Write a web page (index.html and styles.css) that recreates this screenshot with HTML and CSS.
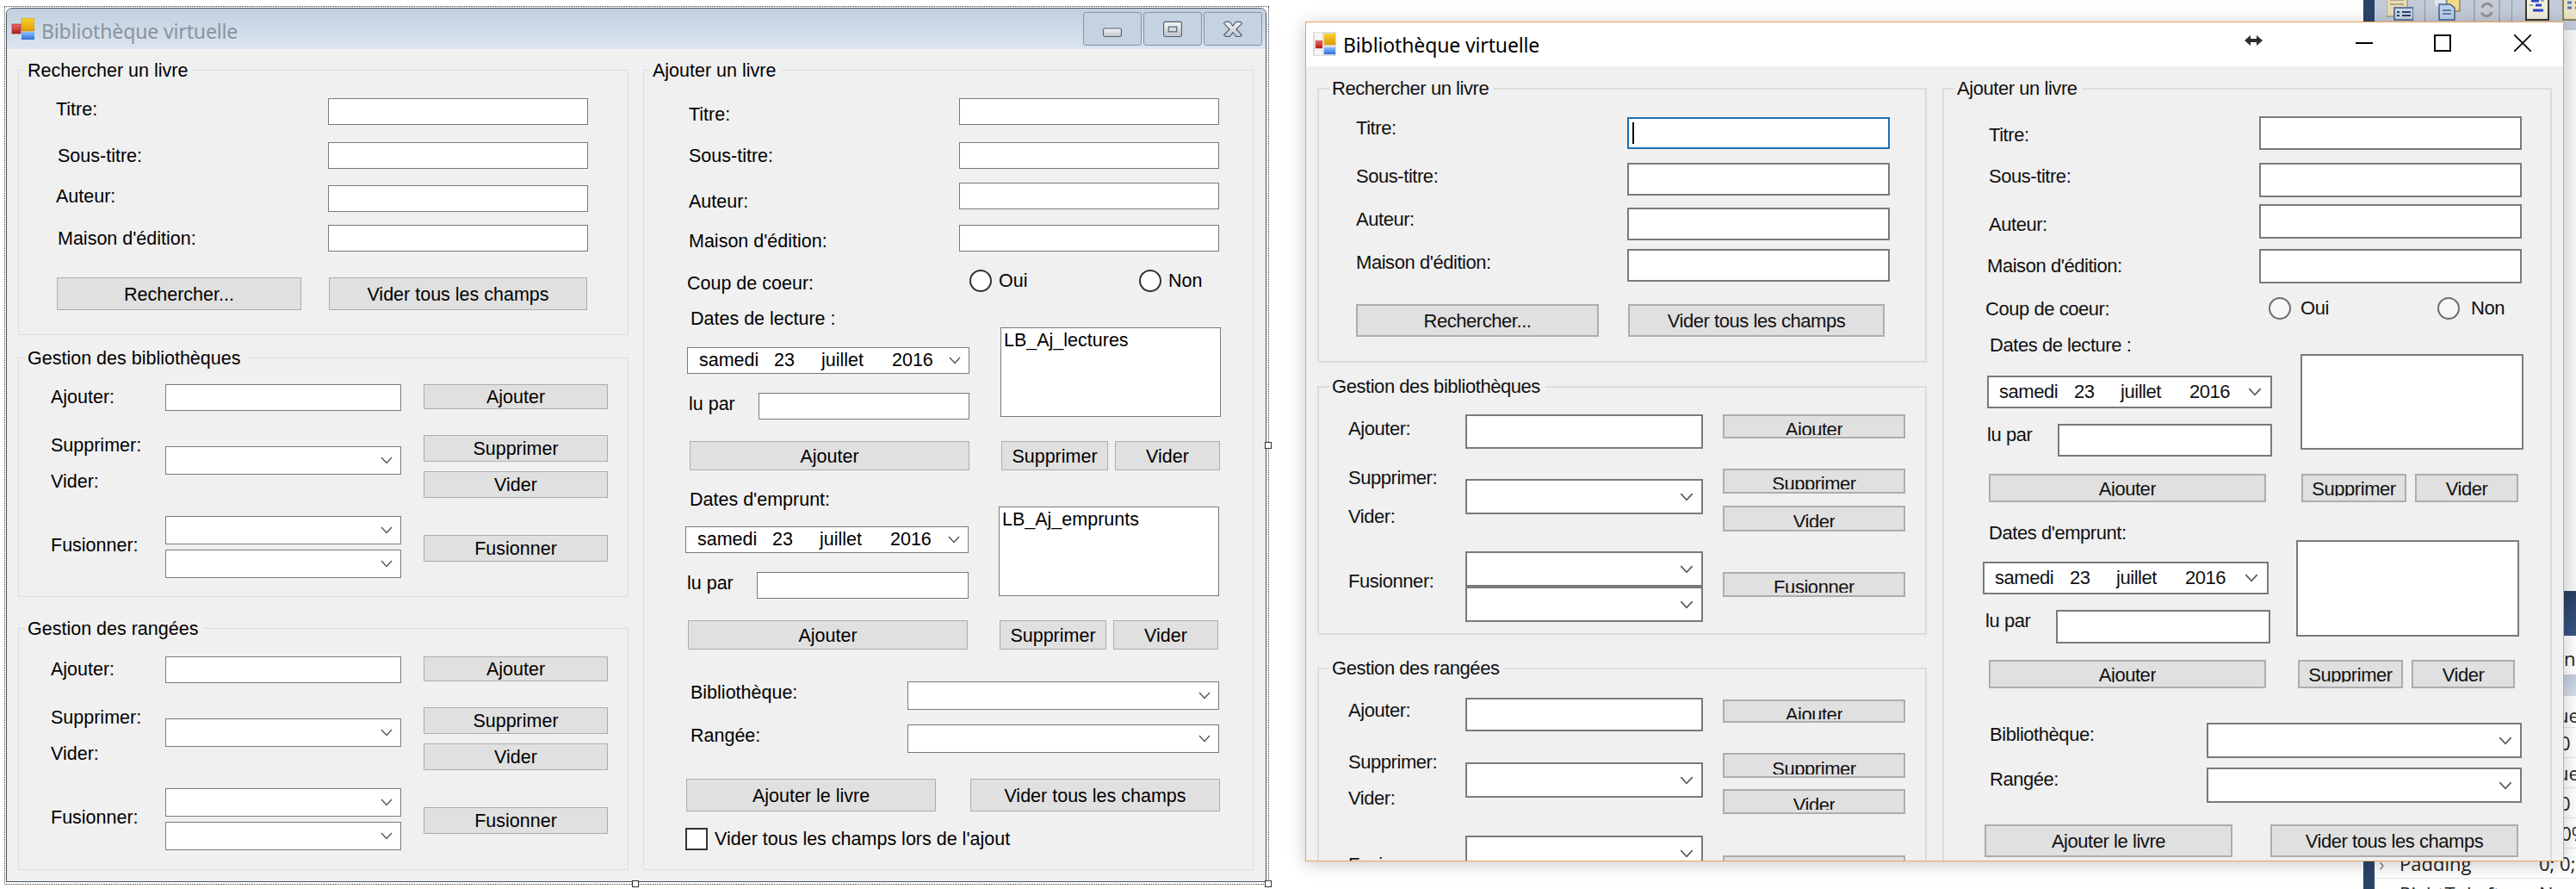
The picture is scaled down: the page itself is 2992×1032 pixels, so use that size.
FILE: index.html
```html
<!DOCTYPE html>
<html lang="fr">
<head>
<meta charset="utf-8">
<title>Bibliothèque virtuelle</title>
<link rel="stylesheet" href="styles.css">
</head>
<body>
<svg class="defs" aria-hidden="true">
  <defs>
    <linearGradient id="gr" x1="0" y1="0" x2="0" y2="1"><stop offset="0" stop-color="#ea6a66"/><stop offset="1" stop-color="#b41a1a"/></linearGradient>
    <linearGradient id="gy" x1="0" y1="0" x2="0" y2="1"><stop offset="0" stop-color="#f8d32a"/><stop offset="1" stop-color="#e09a06"/></linearGradient>
    <linearGradient id="gb" x1="0" y1="0" x2="0" y2="1"><stop offset="0" stop-color="#8cc0fb"/><stop offset="1" stop-color="#2d6fe0"/></linearGradient>
    <linearGradient id="gc" x1="0" y1="0" x2="0" y2="1"><stop offset="0" stop-color="#f7f7f7"/><stop offset="1" stop-color="#bfc3c7"/></linearGradient>
    <symbol id="chev" viewBox="0 0 14 9"><path d="M1 1 L7 7.5 L13 1" fill="none" stroke="#555" stroke-width="1.4"/></symbol>
  </defs>
</svg>

<aside class="panel">
  <div class="navy-strip"></div>
  <div class="panel-main">
    <div class="toolbar">
      <svg class="ti ti1" viewBox="0 0 31 30"><path d="M0 0h24v22H0z" fill="#e6dcb8" stroke="#8a8a70"/><path d="M4 3h16M4 8h16" stroke="#b7ab7c" stroke-width="2"/><rect x="9" y="12" width="22" height="14" fill="#c9d6ea" stroke="#43597f" stroke-width="1.5"/><path d="M12 17h3M18 17h10M12 21h3M18 21h10" stroke="#2c4369" stroke-width="2"/></svg>
      <span class="tsep"></span>
      <svg class="ti ti2" viewBox="0 0 30 30"><path d="M14 0h15v16H14z" fill="#f2d98a" stroke="#6d6232"/><path d="M0 2h12v8H0z" fill="#dfe6f0"/><path d="M5 8h13l5 4v14H5z" fill="#bcd0ee" stroke="#41618f" stroke-width="1.5"/><path d="M9 15h10M9 19h10" stroke="#41618f" stroke-width="1.5"/></svg>
      <svg class="ti ti3" viewBox="0 0 31 30"><rect x="1" y="1" width="29" height="28" fill="#c6ccd4" stroke="#a4abb4" stroke-width="2"/><path d="M10 12a6 6 0 0 1 10-3l2 2M21 17a6 6 0 0 1-10 3l-2-2" fill="none" stroke="#8e9398" stroke-width="3"/></svg>
      <span class="tsep"></span>
      <svg class="ti ti4" viewBox="0 0 28 30"><rect x="1" y="-2" width="26" height="28" fill="#f3efdf" stroke="#3d3a2c" stroke-width="2"/><path d="M7 4h9M12 9h7M9 15h12" stroke="#2b44c8" stroke-width="3"/><path d="M18 4h4M5 9h4" stroke="#9aa2b0" stroke-width="2"/></svg>
      <svg class="ti ti5" viewBox="0 0 30 30"><rect x="1" y="-2" width="28" height="28" fill="#e8e2c4" stroke="#85805e" stroke-width="2"/><path d="M6 6h5M15 6h9M6 12h5M15 12h9" stroke="#4a78b8" stroke-width="3"/></svg>
    </div>
    <div class="panel-blank"></div>
    <div class="panel-title"></div>
    <div class="panel-desc"><span>ne</span></div>
    <div class="panel-head"></div>
    <div class="prop prop-first"><span></span><span></span><span>True</span></div>
    <div class="prop"><span></span><span></span><span>0; 0</span></div>
    <div class="prop"><span></span><span></span><span>True</span></div>
    <div class="prop"><span></span><span></span><span>0; 0</span></div>
    <div class="prop"><span></span><span></span><span>100%</span></div>
    <div class="prop"><span class="exp">›</span><span>Padding</span><span>0; 0; 0; 0</span></div>
    <div class="prop"><span></span><span>RightToLeft</span><span>No</span></div>
  </div>
</aside>

<div class="selection">
  <section class="win w1">
    <header class="tbar">
      <svg class="appicon" viewBox="0 0 27 25"><path d="M0 6.5h27M11.5 0v25M0 18.5h27" stroke="#d5d9df" fill="none"/><rect x="1" y="7" width="10" height="11" fill="url(#gr)" stroke="#8a2020" stroke-width=".6"/><rect x="12" y="0" width="15" height="15" fill="url(#gy)" stroke="#b88a10" stroke-width=".6"/><rect x="12" y="16" width="15" height="9" fill="url(#gb)"/></svg>
      <span class="title">Bibliothèque virtuelle</span>
      <div class="caps">
        <span class="cap"><svg viewBox="0 0 68 39"><rect x="23" y="19" width="22" height="10" rx="2" fill="url(#gc)" stroke="#4f5f70" stroke-width="1.2"/></svg></span>
        <span class="cap"><svg viewBox="0 0 68 39"><rect x="23" y="11" width="22" height="18" rx="2" fill="url(#gc)" stroke="#4f5f70" stroke-width="1.2"/><rect x="29" y="17" width="10" height="6" fill="#d6d9dd" stroke="#4f5f70" stroke-width="1.2"/></svg></span>
        <span class="cap"><svg viewBox="0 0 68 39"><path d="M25 11h5l4 5 4-5h5l2 2-7 7 7 7-2 2h-5l-4-5-4 5h-5l-2-2 7-7-7-7z" fill="url(#gc)" stroke="#4f5f70" stroke-width="1.2"/></svg></span>
      </div>
    </header>
    <div class="body">
      <div class="stack">
        <div class="group w709 h308">
          <div class="legend">Rechercher un livre</div>
          <div class="cols ml43">
            <div class="stack w316">
              <span class="lb mt32">Titre:</span>
              <span class="lb mt28 ml2">Sous-titre:</span>
              <span class="lb mt21">Auteur:</span>
              <span class="lb mt23 ml2">Maison d'édition:</span>
            </div>
            <div class="stack">
              <input class="tb w302 h31 mt32">
              <input class="tb w302 h31 mt20">
              <input class="tb w302 h31 mt19">
              <input class="tb w302 h31 mt15">
            </div>
          </div>
          <div class="line ml44 mt30">
            <button class="btn w284 h38">Rechercher...</button>
            <button class="btn w300 h38 ml32">Vider tous les champs</button>
          </div>
        </div>

        <div class="group w709 h278 mt26">
          <div class="legend">Gestion des bibliothèques</div>
          <div class="cols ml37">
            <div class="stack w133">
              <span class="lb mt32">Ajouter:</span>
              <span class="lb mt30">Supprimer:</span>
              <span class="lb mt16">Vider:</span>
              <span class="lb mt48">Fusionner:</span>
            </div>
            <div class="stack">
              <input class="tb w274 h31 mt30">
              <div class="combo w274 h33 mt41"><svg class="chev"><use href="#chev"/></svg></div>
              <div class="combo w274 h33 mt48"><svg class="chev"><use href="#chev"/></svg></div>
              <div class="combo w274 h33 mt6"><svg class="chev"><use href="#chev"/></svg></div>
            </div>
            <div class="stack ml26">
              <button class="btn w214 h29 mt30">Ajouter</button>
              <button class="btn w214 h31 mt30">Supprimer</button>
              <button class="btn w214 h31 mt11">Vider</button>
              <button class="btn w214 h31 mt43">Fusionner</button>
            </div>
          </div>
        </div>

        <div class="group w709 h281 mt36">
          <div class="legend">Gestion des rangées</div>
          <div class="cols ml37">
            <div class="stack w133">
              <span class="lb mt34">Ajouter:</span>
              <span class="lb mt30">Supprimer:</span>
              <span class="lb mt16">Vider:</span>
              <span class="lb mt48">Fusionner:</span>
            </div>
            <div class="stack">
              <input class="tb w274 h31 mt32">
              <div class="combo w274 h33 mt41"><svg class="chev"><use href="#chev"/></svg></div>
              <div class="combo w274 h33 mt48"><svg class="chev"><use href="#chev"/></svg></div>
              <div class="combo w274 h33 mt6"><svg class="chev"><use href="#chev"/></svg></div>
            </div>
            <div class="stack ml26">
              <button class="btn w214 h29 mt32">Ajouter</button>
              <button class="btn w214 h31 mt30">Supprimer</button>
              <button class="btn w214 h31 mt11">Vider</button>
              <button class="btn w214 h31 mt43">Fusionner</button>
            </div>
          </div>
        </div>
      </div>

      <div class="group w709 h929">
        <div class="legend">Ajouter un livre</div>
        <div class="cols ml52">
          <div class="stack w314">
            <span class="lb mt38">Titre:</span>
            <span class="lb mt22">Sous-titre:</span>
            <span class="lb mt27">Auteur:</span>
            <span class="lb mt20">Maison d'édition:</span>
          </div>
          <div class="stack">
            <input class="tb w302 h31 mt32">
            <input class="tb w302 h31 mt20">
            <input class="tb w302 h31 mt16">
            <input class="tb w302 h31 mt18">
          </div>
        </div>
        <div class="line ml50 mt20">
          <span class="lb w328 mt3">Coup de coeur:</span>
          <label class="radio w197"><input type="radio" name="a1"><span class="lb ml8">Oui</span></label>
          <label class="radio"><input type="radio" name="a1"><span class="lb ml8">Non</span></label>
        </div>
        <div class="cols ml50 mt15">
          <div class="stack w328">
            <span class="lb ml4">Dates de lecture :</span>
            <div class="date w328 h31 mt20"><span class="d-day">samedi</span><span class="d-num">23</span><span class="d-month">juillet</span><span>2016</span><svg class="chev"><use href="#chev"/></svg></div>
            <div class="line mt22"><span class="lb ml2 w81">lu par</span><input class="tb w245 h31"></div>
          </div>
          <div class="stack ml36">
            <div class="list w256 h104 mt23">LB_Aj_lectures</div>
          </div>
        </div>
        <div class="line ml53 mt25">
          <button class="btn w325 h34">Ajouter</button>
          <button class="btn w124 h34 ml37">Supprimer</button>
          <button class="btn w122 h34 ml8">Vider</button>
        </div>
        <div class="cols ml48 mt21">
          <div class="stack w329">
            <span class="lb ml5">Dates d'emprunt:</span>
            <div class="date w329 h31 mt18"><span class="d-day">samedi</span><span class="d-num">23</span><span class="d-month">juillet</span><span>2016</span><svg class="chev"><use href="#chev"/></svg></div>
            <div class="line mt22"><span class="lb ml2 w81">lu par</span><input class="tb w246 h31"></div>
          </div>
          <div class="stack ml35">
            <div class="list w256 h104 mt21">LB_Aj_emprunts</div>
          </div>
        </div>
        <div class="line ml51 mt25">
          <button class="btn w325 h34">Ajouter</button>
          <button class="btn w124 h34 ml37">Supprimer</button>
          <button class="btn w122 h34 ml8">Vider</button>
        </div>
        <div class="line ml54 mt37">
          <span class="lb w252">Bibliothèque:</span>
          <div class="combo w362 h33"><svg class="chev"><use href="#chev"/></svg></div>
        </div>
        <div class="line ml54 mt17">
          <span class="lb w252">Rangée:</span>
          <div class="combo w362 h33"><svg class="chev"><use href="#chev"/></svg></div>
        </div>
        <div class="line ml49 mt30">
          <button class="btn w290 h38">Ajouter le livre</button>
          <button class="btn w290 h38 ml40">Vider tous les champs</button>
        </div>
        <label class="line ml48 mt19"><input class="check" type="checkbox"><span class="lb ml8">Vider tous les champs lors de l'ajout</span></label>
      </div>
    </div>
  </section>
  <span class="handle hd-right"></span>
  <span class="handle hd-bottom"></span>
  <span class="handle hd-corner"></span>
</div>

<section class="win w2">
  <header class="tbar">
    <svg class="appicon" viewBox="0 0 27 28"><rect width="27" height="28" fill="#dcdcdc"/><rect x="2" y="1" width="9" height="8" fill="#f6f6f6"/><rect x="2" y="20" width="9" height="7" fill="#f6f6f6"/><rect x="3" y="10" width="8" height="9" fill="url(#gr)"/><rect x="13" y="2" width="13" height="13" fill="url(#gy)"/><rect x="13" y="18" width="13" height="8" fill="url(#gb)"/></svg>
    <span class="title">Bibliothèque virtuelle</span>
    <div class="caps">
      <svg class="cap2" viewBox="0 0 20 20"><path d="M0 10h20" stroke="#000" stroke-width="2"/></svg>
      <svg class="cap2 gap71" viewBox="0 0 20 20"><rect x="1" y="1" width="18" height="18" fill="none" stroke="#000" stroke-width="2"/></svg>
      <svg class="cap2 gap73" viewBox="0 0 20 20"><path d="M0 0L20 20M20 0L0 20" stroke="#000" stroke-width="1.6"/></svg>
    </div>
  </header>
  <div class="body">
    <div class="stack">
      <div class="group w708 h319">
        <div class="legend">Rechercher un livre</div>
        <div class="cols ml43">
          <div class="stack w315">
            <span class="lb mt32">Titre:</span>
            <span class="lb mt30">Sous-titre:</span>
            <span class="lb mt24">Auteur:</span>
            <span class="lb mt24">Maison d'édition:</span>
          </div>
          <div class="stack">
            <div class="tb focus w305 h37 mt32"><span class="caret"></span></div>
            <input class="tb w305 h38 mt16">
            <input class="tb w305 h38 mt14">
            <input class="tb w305 h38 mt10">
          </div>
        </div>
        <div class="line ml43 mt26">
          <button class="btn w282 h38">Rechercher...</button>
          <button class="btn w298 h38 ml34">Vider tous les champs</button>
        </div>
      </div>

      <div class="group w708 h289 mt27">
        <div class="legend">Gestion des bibliothèques</div>
        <div class="cols ml34">
          <div class="stack w136">
            <span class="lb mt35">Ajouter:</span>
            <span class="lb mt31">Supprimer:</span>
            <span class="lb mt19">Vider:</span>
            <span class="lb mt49">Fusionner:</span>
          </div>
          <div class="stack">
            <input class="tb w276 h40 mt31">
            <div class="combo w276 h41 mt35"><svg class="chev"><use href="#chev"/></svg></div>
            <div class="combo w276 h41 mt43"><svg class="chev"><use href="#chev"/></svg></div>
            <div class="combo w276 h41"><svg class="chev"><use href="#chev"/></svg></div>
          </div>
          <div class="stack ml23">
            <button class="btn cut w212 h28 mt31 pt3"><span class="h19">Ajouter</span></button>
            <button class="btn cut w212 h29 mt35 pt3"><span class="h19">Supprimer</span></button>
            <button class="btn cut w212 h30 mt14 pt4"><span class="h19">Vider</span></button>
            <button class="btn cut w212 h29 mt47 pt3"><span class="h19">Fusionner</span></button>
          </div>
        </div>
      </div>

      <div class="group w708 h300 mt38">
        <div class="legend">Gestion des rangées</div>
        <div class="cols ml34">
          <div class="stack w136">
            <span class="lb mt35">Ajouter:</span>
            <span class="lb mt34">Supprimer:</span>
            <span class="lb mt16">Vider:</span>
            <span class="lb mt51">Fusionner:</span>
          </div>
          <div class="stack">
            <input class="tb w276 h39 mt33">
            <div class="combo w276 h41 mt36"><svg class="chev"><use href="#chev"/></svg></div>
            <div class="combo w276 h41 mt44"><svg class="chev"><use href="#chev"/></svg></div>
          </div>
          <div class="stack ml23">
            <button class="btn cut w212 h27 mt35 pt3"><span class="h18">Ajouter</span></button>
            <button class="btn cut w212 h29 mt35 pt4"><span class="h19">Supprimer</span></button>
            <button class="btn cut w212 h29 mt13 pt4"><span class="h18">Vider</span></button>
            <button class="btn cut w212 h29 mt48 pt4"><span class="h19">Fusionner</span></button>
          </div>
        </div>
      </div>
    </div>

    <div class="group w708 h950">
      <div class="legend">Ajouter un livre</div>
      <div class="cols ml50">
        <div class="stack w316">
          <span class="lb mt40 ml2">Titre:</span>
          <span class="lb mt22 ml2">Sous-titre:</span>
          <span class="lb mt30 ml2">Auteur:</span>
          <span class="lb mt22">Maison d'édition:</span>
        </div>
        <div class="stack">
          <input class="tb w305 h39 mt31">
          <input class="tb w305 h40 mt15">
          <input class="tb w305 h40 mt8">
          <input class="tb w305 h40 mt12">
        </div>
      </div>
      <div class="line ml48 mt16">
        <span class="lb w329 mt1">Coup de coeur:</span>
        <label class="radio w196"><input type="radio" name="a2"><span class="lb ml11">Oui</span></label>
        <label class="radio"><input type="radio" name="a2"><span class="lb ml13">Non</span></label>
      </div>
      <div class="cols ml50 mt16">
        <div class="stack w331">
          <span class="lb ml3">Dates de lecture :</span>
          <div class="date w331 h38 mt22"><span class="d-day">samedi</span><span class="d-num">23</span><span class="d-month">juillet</span><span>2016</span><svg class="chev"><use href="#chev"/></svg></div>
          <div class="line mt18"><span class="lb w82">lu par</span><input class="tb w249 h38"></div>
        </div>
        <div class="stack ml33">
          <div class="list w259 h111 mt23"></div>
        </div>
      </div>
      <div class="line ml52 mt20">
        <button class="btn cut w322 h33 pt3"><span class="h21">Ajouter</span></button>
        <button class="btn cut w122 h33 ml41 pt3"><span class="h21">Supprimer</span></button>
        <button class="btn w120 h33 ml10">Vider</button>
      </div>
      <div class="cols ml45 mt23">
        <div class="stack w334">
          <span class="lb ml7">Dates d'emprunt:</span>
          <div class="date w332 h38 mt20"><span class="d-day">samedi</span><span class="d-num">23</span><span class="d-month">juillet</span><span>2016</span><svg class="chev"><use href="#chev"/></svg></div>
          <div class="line mt18"><span class="lb ml3 w82">lu par</span><input class="tb w249 h39"></div>
        </div>
        <div class="stack ml30">
          <div class="list w259 h112 mt21"></div>
        </div>
      </div>
      <div class="line ml52 mt19">
        <button class="btn cut w322 h33 pt3"><span class="h21">Ajouter</span></button>
        <button class="btn cut w122 h33 ml37 pt3"><span class="h21">Supprimer</span></button>
        <button class="btn w120 h33 ml10">Vider</button>
      </div>
      <div class="line ml53 mt40">
        <span class="lb w252 mt1">Bibliothèque:</span>
        <div class="combo w366 h41"><svg class="chev"><use href="#chev"/></svg></div>
      </div>
      <div class="line ml53 mt11">
        <span class="lb w252 mt1">Rangée:</span>
        <div class="combo w366 h41"><svg class="chev"><use href="#chev"/></svg></div>
      </div>
      <div class="line ml47 mt25">
        <button class="btn w288 h38">Ajouter le livre</button>
        <button class="btn w288 h38 ml44">Vider tous les champs</button>
      </div>
    </div>
  </div>
</section>

<svg class="resize-cursor" viewBox="0 0 21 14"><path d="M0 7L7 1v4h7V1l7 6-7 6V9H7v4z" fill="#2d2d2d"/></svg>
</body>
</html>
```

FILE: styles.css
```css
* { box-sizing: border-box; }
html, body { margin: 0; padding: 0; }
body {
  position: relative;
  width: 2992px;
  height: 1032px;
  overflow: hidden;
  background: #fff;
  font-family: "Liberation Sans", Arial, sans-serif;
  font-size: 21.5px;
  color: #000;
}
.defs { position: absolute; width: 0; height: 0; }

/* windows on the desktop */
.selection {
  position: absolute;
  left: 5px;
  top: 7px;
  width: 1469px;
  height: 1020px;
  padding: 1px;
  border: 1px dotted #3c3c3c;
}
.win { display: flex; flex-direction: column; overflow: hidden; background: #f0f0f0; }
.w1 { width: 1464px; height: 1015px; border: 1px solid #4e555e; border-radius: 7px 7px 0 0; box-shadow: inset 0 0 0 1px #e4ecf4; }
.w2 {
  position: absolute;
  left: 1516px;
  top: 25px;
  width: 1462px;
  height: 975px;
  border: 1px solid #e9a558;
  box-shadow: 0 3px 20px rgba(0, 0, 0, .22);
  font-size: 22px;
  letter-spacing: -.45px;
  color: #111;
}
.handle { position: absolute; width: 8px; height: 8px; background: #fff; border: 1px solid #333; }
.hd-right { left: 1463px; top: 505px; }
.hd-bottom { left: 728px; top: 1014px; }
.hd-corner { left: 1463px; top: 1014px; }

/* title bars */
.tbar { display: flex; align-items: flex-start; flex: none; }
.w1 .tbar { height: 47px; background: linear-gradient(#c0cede, #dbe6f0); padding-left: 5px; }
.w2 .tbar { height: 51px; background: #fff; padding-left: 8px; }
.appicon { flex: none; width: 27px; height: 25px; margin-top: 11px; }
.w2 .appicon { height: 28px; }
.title { font-family: "Noto Sans", sans-serif; font-size: 23px; line-height: 30px; white-space: nowrap; letter-spacing: -.13px; }
.w1 .title { margin: 11px 0 0 8px; color: #8b939e; }
.w2 .title { margin: 11px 0 0 8px; color: #000; }
.caps { display: flex; margin-left: auto; }
.w1 .caps { gap: 2px; margin-top: 4px; margin-right: 4px; }
.w2 .caps { margin-top: 14px; margin-right: 37px; }
.cap { display: block; width: 68px; height: 39px; border: 1px solid #8495ad; border-radius: 3px; background: #c4d2e1; }
.cap svg { display: block; width: 66px; height: 37px; }
.cap2 { display: block; width: 20px; height: 20px; }
.gap71 { margin-left: 71px; }
.gap73 { margin-left: 73px; }

.body { flex: 1; display: flex; min-height: 0; overflow: hidden; }
.w1 .body { padding: 24px 0 0 13px; gap: 17px; }
.w2 .body { padding: 25px 0 0 13px; gap: 18px; }

/* group boxes */
.group { flex: none; border: 1px solid #dcdcdc; }
.w2 .group { border: 2px solid #dcdcdc; }
.legend {
  width: fit-content;
  height: 26px;
  line-height: 26px;
  margin: -13px 0 -13px 7px;
  padding: 0 6px 0 3px;
  background: #f0f0f0;
  white-space: nowrap;
}
.w2 .legend { margin: -14px 0 -12px 12px; }

/* flow helpers */
.stack { display: flex; flex-direction: column; align-items: flex-start; flex: none; }
.cols { display: flex; align-items: flex-start; }
.line { display: flex; align-items: flex-start; }
.lb { display: block; flex: none; height: 26px; line-height: 26px; white-space: nowrap; }

/* controls */
.tb { display: block; flex: none; margin: 0; padding: 0; background: #fff; border: 1px solid #7a7a7a; border-radius: 0; outline: none; }
.w2 .tb { border-width: 2px; }
.w2 .focus { border-color: #1a6fb3; }
.caret { display: block; width: 2px; height: 25px; margin: 4px 0 0 4px; background: #000; }
.combo, .date { display: flex; align-items: center; flex: none; background: #fff; border: 1px solid #7a7a7a; }
.combo { justify-content: flex-end; padding-right: 9px; }
.w2 .combo, .w2 .date { border-width: 2px; }
.date { padding: 0 9px 0 13px; white-space: nowrap; }
.w2 .date { padding: 0 10px 0 12px; }
.d-day { width: 87px; }
.d-num { width: 55px; }
.d-month { width: 82px; }
.w2 .d-num { width: 54px; }
.w2 .d-month { width: 80px; }
.chev { display: block; flex: none; width: 14px; height: 9px; }
.date .chev { margin-left: auto; }
.w2 .chev { width: 16px; height: 10px; }
.list { flex: none; background: #fff; border: 1px solid #7a7a7a; padding: 1px 3px; line-height: 26px; white-space: nowrap; }
.w2 .list { border-width: 2px; }
.btn {
  display: block;
  flex: none;
  margin: 0;
  padding: 2px 0 0;
  background: #e0e0e0;
  border: 1px solid #adadad;
  border-radius: 0;
  font: inherit;
  letter-spacing: inherit;
  color: inherit;
  text-align: center;
  white-space: nowrap;
}
.w2 .btn { border-width: 2px; }
.w2 .cut { display: flex; align-items: flex-start; justify-content: center; overflow: hidden; }
.cut span { display: block; overflow: hidden; line-height: 26px; }
.radio { display: flex; align-items: flex-start; flex: none; }
.radio input, .check {
  appearance: none;
  flex: none;
  display: block;
  margin: 0;
  width: 26px;
  height: 26px;
  background: #fff;
  border: 2px solid #333;
}
.radio input { border-radius: 50%; }
.w2 .radio input { border-color: #6e6e6e; background: #f6f6f6; }

/* sizes */
.w81 { width: 81px; } .w82 { width: 82px; } .w120 { width: 120px; } .w122 { width: 122px; } .w124 { width: 124px; }
.w133 { width: 133px; } .w136 { width: 136px; } .w196 { width: 196px; } .w197 { width: 197px; } .w212 { width: 212px; }
.w214 { width: 214px; } .w245 { width: 245px; } .w246 { width: 246px; } .w249 { width: 249px; } .w252 { width: 252px; }
.w256 { width: 256px; } .w259 { width: 259px; } .w274 { width: 274px; } .w276 { width: 276px; } .w282 { width: 282px; }
.w284 { width: 284px; } .w288 { width: 288px; } .w290 { width: 290px; } .w298 { width: 298px; } .w300 { width: 300px; }
.w302 { width: 302px; } .w305 { width: 305px; } .w314 { width: 314px; } .w315 { width: 315px; } .w316 { width: 316px; }
.w322 { width: 322px; } .w325 { width: 325px; } .w328 { width: 328px; } .w329 { width: 329px; } .w331 { width: 331px; }
.w332 { width: 332px; } .w334 { width: 334px; } .w362 { width: 362px; } .w366 { width: 366px; } .w708 { width: 708px; } .w709 { width: 709px; }
.h18 { height: 18px; } .h19 { height: 19px; } .h20 { height: 20px; } .h21 { height: 21px; }
.h27 { height: 27px; } .h28 { height: 28px; } .h29 { height: 29px; } .h30 { height: 30px; } .h31 { height: 31px; }
.h33 { height: 33px; } .h34 { height: 34px; } .h37 { height: 37px; } .h38 { height: 38px; } .h39 { height: 39px; }
.h40 { height: 40px; } .h41 { height: 41px; } .h104 { height: 104px; } .h111 { height: 111px; } .h112 { height: 112px; }
.h278 { height: 278px; } .h281 { height: 281px; } .h289 { height: 289px; } .h300 { height: 300px; } .h308 { height: 308px; }
.h319 { height: 319px; } .h929 { height: 929px; } .h950 { height: 950px; }
.w2 .pt3 { padding-top: 3px; } .w2 .pt4 { padding-top: 4px; }

/* spacing */
.mt1 { margin-top: 1px; } .mt3 { margin-top: 3px; } .mt6 { margin-top: 6px; } .mt8 { margin-top: 8px; } .mt10 { margin-top: 10px; }
.mt11 { margin-top: 11px; } .mt12 { margin-top: 12px; } .mt13 { margin-top: 13px; } .mt14 { margin-top: 14px; } .mt15 { margin-top: 15px; }
.mt16 { margin-top: 16px; } .mt17 { margin-top: 17px; } .mt18 { margin-top: 18px; } .mt19 { margin-top: 19px; } .mt20 { margin-top: 20px; }
.mt21 { margin-top: 21px; } .mt22 { margin-top: 22px; } .mt23 { margin-top: 23px; } .mt24 { margin-top: 24px; } .mt25 { margin-top: 25px; }
.mt26 { margin-top: 26px; } .mt27 { margin-top: 27px; } .mt28 { margin-top: 28px; } .mt30 { margin-top: 30px; } .mt31 { margin-top: 31px; }
.mt32 { margin-top: 32px; } .mt33 { margin-top: 33px; } .mt34 { margin-top: 34px; } .mt35 { margin-top: 35px; } .mt36 { margin-top: 36px; }
.mt37 { margin-top: 37px; } .mt38 { margin-top: 38px; } .mt40 { margin-top: 40px; } .mt41 { margin-top: 41px; } .mt43 { margin-top: 43px; }
.mt44 { margin-top: 44px; } .mt47 { margin-top: 47px; } .mt48 { margin-top: 48px; } .mt49 { margin-top: 49px; } .mt51 { margin-top: 51px; }
.ml2 { margin-left: 2px; } .ml3 { margin-left: 3px; } .ml4 { margin-left: 4px; } .ml5 { margin-left: 5px; } .ml7 { margin-left: 7px; }
.ml8 { margin-left: 8px; } .ml10 { margin-left: 10px; } .ml11 { margin-left: 11px; } .ml13 { margin-left: 13px; }
.ml23 { margin-left: 23px; } .ml26 { margin-left: 26px; } .ml30 { margin-left: 30px; } .ml32 { margin-left: 32px; } .ml33 { margin-left: 33px; }
.ml34 { margin-left: 34px; } .ml35 { margin-left: 35px; } .ml36 { margin-left: 36px; } .ml37 { margin-left: 37px; } .ml40 { margin-left: 40px; }
.ml41 { margin-left: 41px; } .ml43 { margin-left: 43px; } .ml44 { margin-left: 44px; } .ml45 { margin-left: 45px; } .ml47 { margin-left: 47px; }
.ml48 { margin-left: 48px; } .ml49 { margin-left: 49px; } .ml50 { margin-left: 50px; } .ml51 { margin-left: 51px; } .ml52 { margin-left: 52px; }
.ml53 { margin-left: 53px; } .ml54 { margin-left: 54px; }

/* IDE panel behind the running window */
.panel {
  position: absolute;
  left: 2745px;
  top: 0;
  width: 247px;
  height: 1032px;
  display: flex;
  overflow: hidden;
  font-family: "Open Sans", sans-serif;
  font-size: 22px;
  color: #222;
}
.navy-strip { flex: none; width: 13px; background: #2b4369; }
.panel-main { flex: 1; display: flex; flex-direction: column; min-width: 0; }
.toolbar { flex: none; height: 35px; display: flex; align-items: flex-start; padding-left: 14px; background: #c3cad8; overflow: hidden; }
.ti { flex: none; display: block; height: 30px; margin-top: -3px; }
.ti1 { width: 31px; }
.ti2 { width: 30px; margin-left: 25px; }
.ti3 { width: 31px; margin-left: 15px; }
.ti4 { width: 28px; margin-left: 15px; }
.ti5 { width: 30px; margin-left: 15px; }
.tsep { flex: none; width: 1px; height: 35px; margin-left: 13px; background: #8f98aa; }
.tsep + .ti2 { margin-left: 11px; }
.panel-blank { flex: none; height: 651px; background: #f7f7f7; }
.panel-title { flex: none; height: 52px; background: linear-gradient(#2a3f63, #3a5585); }
.panel-desc { flex: none; height: 45px; background: #fff; padding-left: 220px; line-height: 52px; }
.panel-head { flex: none; height: 25px; background: linear-gradient(#c2cde0, #d6dde9); }
.prop { flex: none; display: grid; grid-template-columns: 29px 162px 1fr; height: 35px; line-height: 34px; background: #fff; border-bottom: 1px solid #e6e6e6; white-space: nowrap; }
.prop-first { height: 37px; line-height: 44px; }
.prop span { overflow: visible; min-width: 0; }
.exp { padding-left: 5px; color: #888; }

.resize-cursor { position: absolute; left: 2607px; top: 40px; width: 21px; height: 14px; }
```
